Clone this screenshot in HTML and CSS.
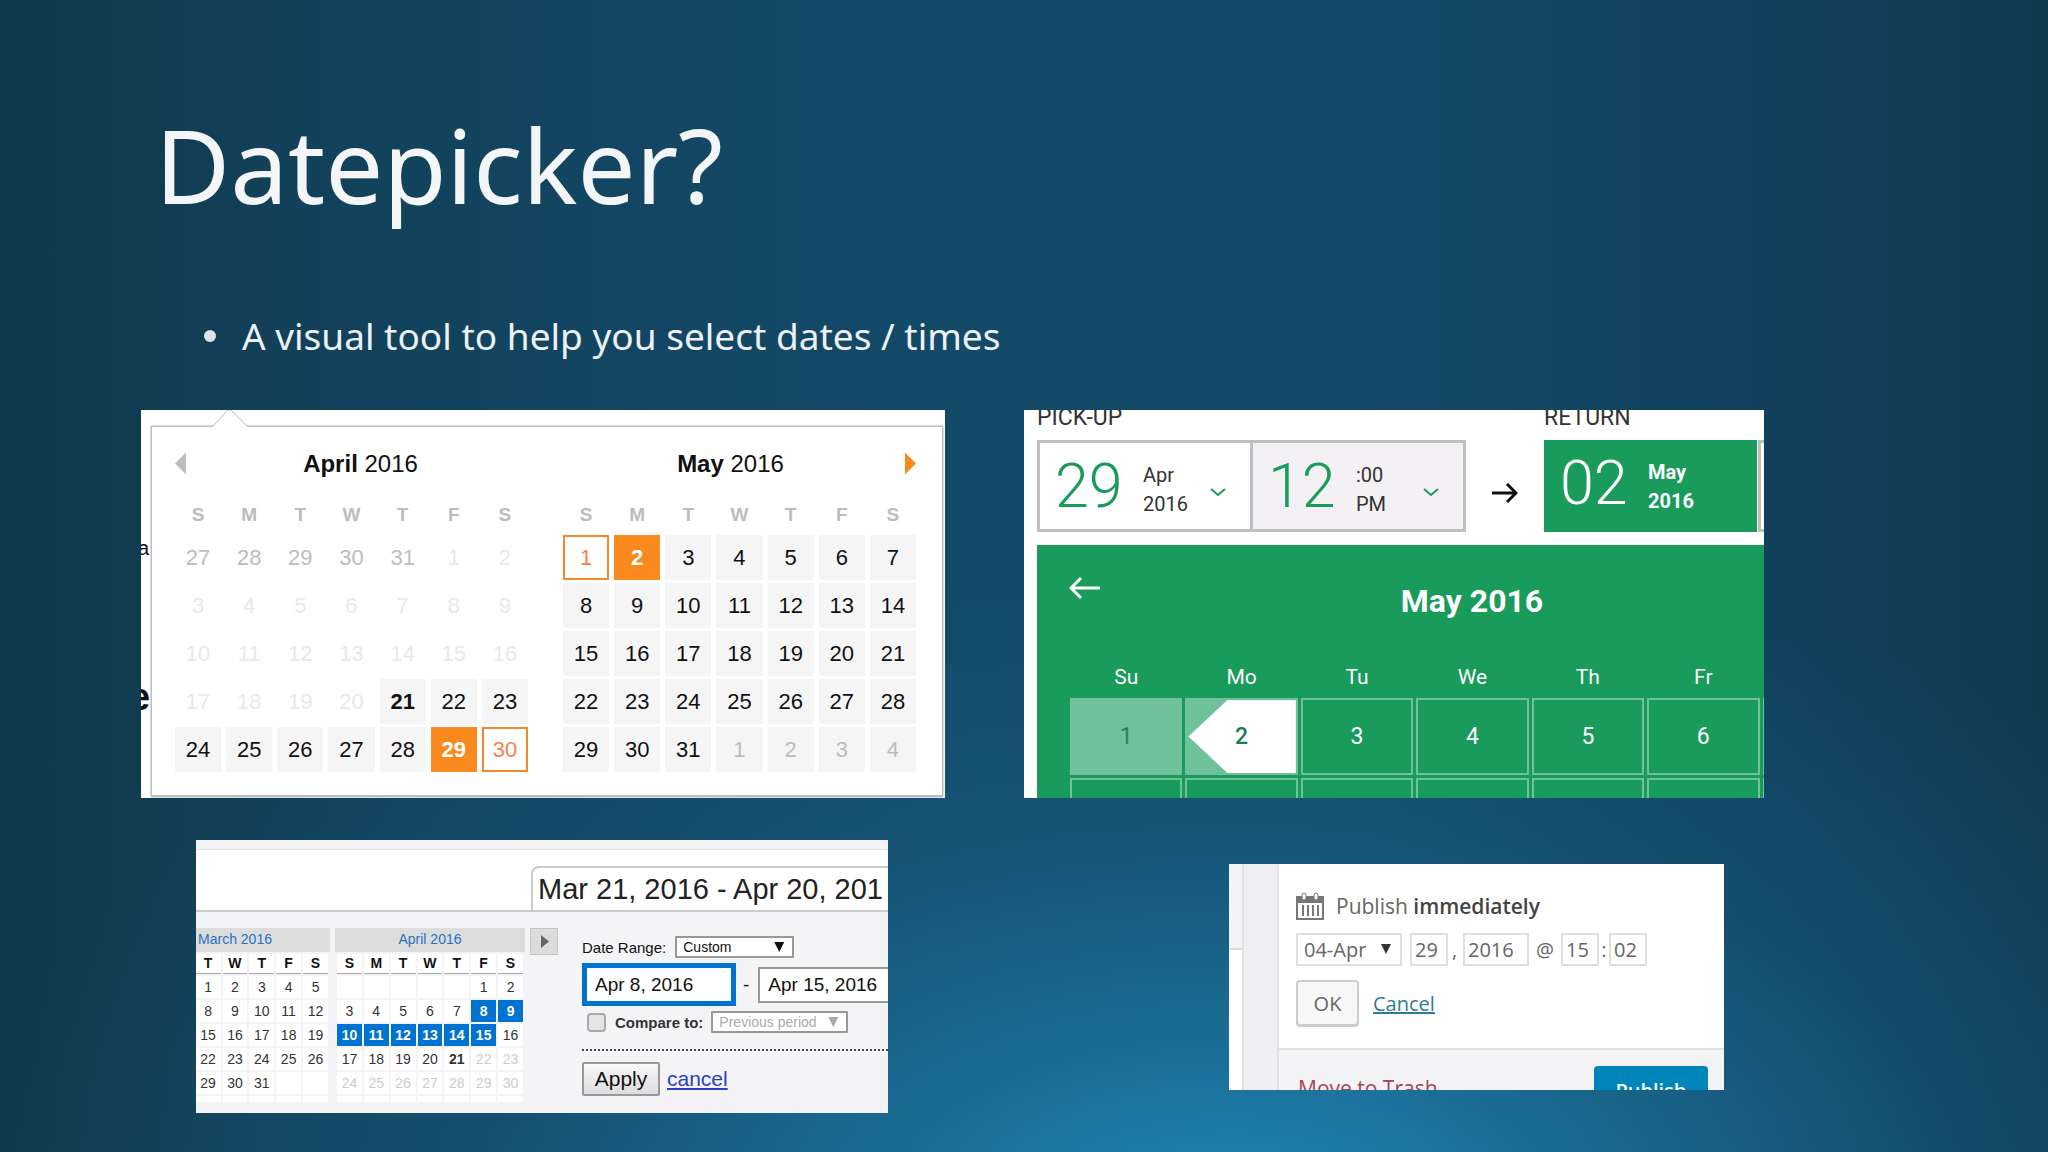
FILE: index.html
```html
<!DOCTYPE html>
<html lang="en">
<head>
    <meta charset="UTF-8">
    <meta name="viewport" content="width=device-width, initial-scale=1.0">
    <title>Datepicker?</title>
    <link rel="stylesheet" href="styles.css">
</head>
<body>

    <main class="slide">
        <h1>Datepicker?</h1>
        <ul class="points">
            <li>A visual tool to help you select dates / times</li>
        </ul>

        <div class="examples">

            <!-- Two month hotel picker -->
            <section class="panel hotel">
                <span class="behind behind-small">a</span>
                <span class="behind behind-large">e</span>
                <div class="popup">
                    <svg class="notch" width="36" height="18" viewBox="0 0 36 18">
                        <path d="M0 18 L1 17 L16 1 H19 L35 17 L36 18 Z" fill="#fff"/>
                        <path d="M0 17 H1 L16 1 H19 L35 17 H36" fill="none" stroke="#bcbcbe" stroke-width="1"/>
                    </svg>
                    <div class="month">
                        <div class="month-head">
                            <button class="nav prev" type="button" aria-label="Previous month"></button>
                            <h2><b>April</b> 2016</h2>
                        </div>
                        <table class="days" id="hotelApril"></table>
                    </div>
                    <div class="month">
                        <div class="month-head">
                            <h2><b>May</b> 2016</h2>
                            <button class="nav next" type="button" aria-label="Next month"></button>
                        </div>
                        <table class="days" id="hotelMay"></table>
                    </div>
                </div>
            </section>

            <!-- Car rental picker -->
            <section class="panel rental">
                <div class="rental-fields">
                    <div class="field">
                        <p class="field-label">PICK-UP</p>
                        <div class="boxes">
                            <button class="box" type="button">
                                <span class="big">29</span>
                                <span class="small">Apr<br>2016</span>
                                <svg width="16" height="10" viewBox="0 0 16 10"><path d="M1 1 L8 7 L15 1" fill="none" stroke="#199b5b" stroke-width="2"/></svg>
                            </button>
                            <button class="box time" type="button">
                                <span class="big">12</span>
                                <span class="small">:00<br>PM</span>
                                <svg width="16" height="10" viewBox="0 0 16 10"><path d="M1 1 L8 7 L15 1" fill="none" stroke="#199b5b" stroke-width="2"/></svg>
                            </button>
                        </div>
                    </div>
                    <svg class="to" width="26" height="20" viewBox="0 0 26 20"><path d="M0 10 H24 M15 1 L24 10 L15 19" fill="none" stroke="#111" stroke-width="3"/></svg>
                    <div class="field">
                        <p class="field-label">RETURN</p>
                        <div class="boxes">
                            <button class="box active" type="button">
                                <span class="big">02</span>
                                <span class="small">May<br>2016</span>
                            </button>
                            <span class="box rest"></span>
                        </div>
                    </div>
                </div>
                <div class="rental-calendar">
                    <div class="rental-head">
                        <button type="button" aria-label="Previous month">
                            <svg width="32" height="24" viewBox="0 0 32 24"><path d="M31 12 H2 M12 2 L2 12 L12 22" fill="none" stroke="#fff" stroke-width="3"/></svg>
                        </button>
                        <h2>May 2016</h2>
                    </div>
                    <table class="days" id="rentalMay"></table>
                </div>
            </section>

            <!-- Analytics date range -->
            <section class="panel analytics">
                <div class="tabs">
                    <div class="tab">Mar 21, 2016 - Apr 20, 201</div>
                </div>
                <div class="range">
                    <div class="range-months">
                        <table class="days" id="rangeMarch"><caption>March 2016</caption></table>
                        <table class="days" id="rangeApril"><caption>April 2016</caption></table>
                    </div>
                    <button class="step" type="button" aria-label="Next month"></button>
                    <form class="range-form">
                        <div class="line">
                            <label for="preset">Date Range:</label>
                            <span class="select preset">
                                <select id="preset"><option>Custom</option></select>
                            </span>
                        </div>
                        <div class="line dates">
                            <input class="from" type="text" value="Apr 8, 2016" aria-label="From">
                            <span>-</span>
                            <input class="until" type="text" value="Apr 15, 2016" aria-label="To">
                        </div>
                        <div class="line compare">
                            <input type="checkbox" id="compare">
                            <label for="compare">Compare to:</label>
                            <span class="select period">
                                <select aria-label="Compare period" disabled><option>Previous period</option></select>
                            </span>
                        </div>
                        <div class="actions">
                            <button type="button">Apply</button>
                            <a href="#">cancel</a>
                        </div>
                    </form>
                </div>
            </section>

            <!-- Publish box -->
            <section class="panel publish">
                <div class="editor"></div>
                <div class="gutter"></div>
                <div class="postbox">
                    <div class="schedule">
                        <p class="when">
                            <svg width="28" height="28" viewBox="0 0 28 28">
                                <rect x="1" y="5" width="26" height="22" fill="#fff" stroke="#777" stroke-width="2"/>
                                <rect x="1" y="4" width="26" height="7" fill="#777"/>
                                <rect x="6" y="1" width="4" height="7" rx="2" fill="#fff" stroke="#777"/>
                                <rect x="18" y="1" width="4" height="7" rx="2" fill="#fff" stroke="#777"/>
                                <path d="M7 13 V24 M12 13 V24 M17 13 V24 M22 13 V24" stroke="#777" stroke-width="2"/>
                            </svg>
                            <span>Publish <b>immediately</b></span>
                        </p>
                        <div class="stamp">
                            <span class="select month-select">
                                <select aria-label="Month"><option>04-Apr</option></select>
                            </span>
                            <input class="two day" type="text" value="29" aria-label="Day">
                            <span class="comma">,</span>
                            <input class="four" type="text" value="2016" aria-label="Year">
                            <span class="at">@</span>
                            <input class="two" type="text" value="15" aria-label="Hour">
                            <span class="colon">:</span>
                            <input class="two" type="text" value="02" aria-label="Minute">
                        </div>
                        <div class="confirm">
                            <button type="button">OK</button>
                            <a href="#">Cancel</a>
                        </div>
                    </div>
                    <div class="major">
                        <a href="#">Move to Trash</a>
                        <button type="button">Publish</button>
                    </div>
                </div>
            </section>

        </div>
    </main>

    <script src="script.js"></script>
</body>
</html>
```
FILE: styles.css
```css
*, *::before, *::after {
    box-sizing: border-box;
    margin: 0;
    padding: 0;
}

body {
    min-height: 100vh;
    font-family: "Liberation Sans", Arial, sans-serif;
    background:
        radial-gradient(ellipse 62% 58% at 60% 106%, #2088ba 0%, rgba(30, 122, 167, 0.7) 28%, rgba(26, 100, 140, 0.35) 60%, rgba(20, 80, 115, 0) 100%),
        linear-gradient(90deg, #0f384a 0%, #12415a 14%, #134a68 45%, #134a68 65%, #11405b 88%, #0f394f 100%);
    color: #111;
    overflow-x: hidden;
}

button, input, select {
    font: inherit;
    color: inherit;
    background: none;
    border: 0;
    border-radius: 0;
    appearance: none;
}

/* Slide text */
.slide {
    padding: 104px 284px 38px 141px;
}

h1 {
    padding-left: 14px;
    font-family: "Noto Sans", sans-serif;
    font-size: 103px;
    font-weight: 400;
    line-height: 120px;
    color: #f4f5f7;
}

.points {
    margin: 84px 0 46px 63px;
    list-style: none;
}

.points li {
    display: flex;
    align-items: center;
    gap: 26px;
    font-family: "Noto Sans", sans-serif;
    font-size: 37px;
    line-height: 56px;
    color: #eef1f4;
}

.points li::before {
    content: "";
    width: 12px;
    height: 12px;
    border-radius: 50%;
    background: #dfe5e9;
}

.examples {
    display: grid;
    grid-template-columns: 804fr 740fr;
    column-gap: 79px;
    align-items: start;
}

.panel {
    position: relative;
    min-width: 0;
    overflow: hidden;
    background: #fff;
}

/* Shared calendar tables */
.days {
    table-layout: fixed;
    border-collapse: separate;
    text-align: center;
}

.days td button {
    display: block;
    width: 100%;
    height: 100%;
    text-align: center;
}

/* Hotel picker */
.hotel {
    padding: 16px 2px 1px 10px;
    height: 388px;
}

.behind {
    position: absolute;
    left: -3px;
}

.behind-small {
    top: 127px;
    font-size: 20px;
}

.behind-large {
    top: 266px;
    left: -12px;
    font-size: 38px;
    font-weight: 700;
}

.popup {
    position: relative;
    display: flex;
    gap: 25px;
    height: 371px;
    padding: 20px 18px;
    background: #fff;
    border: 1px solid #bcbcbe;
    border-bottom-width: 2px;
    box-shadow: 0 0 2px #999;
}

.notch {
    position: absolute;
    top: -18px;
    left: 60px;
}

.month-head {
    display: flex;
    align-items: center;
    height: 33px;
    padding: 0 5px;
}

.month-head h2 {
    flex: 1;
    font-size: 24px;
    font-weight: 400;
    text-align: center;
}

.nav {
    width: 18px;
    height: 22px;
}

.nav::before {
    content: "";
    display: block;
    width: 11px;
    height: 22px;
    background: #bcbcbe;
    clip-path: polygon(100% 0, 100% 100%, 0 50%);
}

.nav.next::before {
    margin-left: auto;
    background: #fa8a1e;
    clip-path: polygon(0 0, 100% 50%, 0 100%);
}

.hotel .days {
    width: 363px;
    border-spacing: 5px 3px;
    font-size: 22px;
}

.hotel th {
    height: 49px;
    padding-top: 14px;
    font-size: 19px;
    color: #bcbcbe;
}

.hotel td {
    height: 45px;
    background: #f5f5f6;
}

.hotel td.past,
.hotel td.before {
    background: #fff;
    color: #ebe8ec;
}

.hotel td.before,
.hotel td.after {
    color: #bcbcbe;
}

.hotel td.today {
    font-weight: 700;
}

.hotel td.picked {
    background: #fa8a1e;
    color: #fff;
    font-weight: 700;
}

.hotel td.between {
    background: #fff;
    border: 2px solid #f08a2c;
    color: #f5824a;
}

/* Car rental picker */
.rental {
    height: 388px;
    padding-left: 13px;
    font-family: Roboto, sans-serif;
}

.rental-fields {
    display: flex;
    height: 135px;
}

.field {
    flex: none;
}

.field-label {
    height: 36px;
    margin-top: -6px;
    font-size: 23px;
    line-height: 28px;
    color: #333;
}

.boxes {
    display: flex;
}

.box {
    display: flex;
    align-items: center;
    width: 216px;
    height: 92px;
    padding: 0 24px 0 15px;
    border: 3px solid #bfbfc1;
    color: #333;
    text-align: left;
}

.box .big {
    width: 88px;
    font-size: 61px;
    font-weight: 300;
    line-height: 64px;
    color: #199b5b;
}

.box .small {
    flex: 1;
    padding-top: 8px;
    font-size: 20px;
    line-height: 29px;
}

.box svg {
    margin-top: 14px;
}

.box.time {
    margin-left: -3px;
    background: #f3f1f4;
}

.box.active {
    width: 213px;
    padding: 0 24px 6px 13px;
    background: #199b5b;
    border-color: #199b5b;
    color: #fff;
}

.box.active .big {
    color: #fff;
}

.box.active .small {
    font-weight: 700;
}

.box.rest {
    margin-left: 1px;
}

.to {
    flex: none;
    margin: 73px 26px 0;
}

.rental-calendar {
    width: 870px;
    padding: 0 30px;
    background: #199b5b;
    color: #fff;
}

.rental-head {
    display: grid;
    grid-template-columns: 32px 1fr 32px;
    align-items: start;
    height: 110px;
    padding: 31px 2px 0;
}

.rental-head button {
    height: 24px;
}

.rental-head h2 {
    padding-top: 5px;
    font-size: 32px;
    font-weight: 700;
    line-height: 40px;
    text-align: center;
}

.rental .days {
    width: 811px;
    border-spacing: 3px;
    font-size: 23px;
}

.rental th {
    height: 37px;
    font-size: 21px;
    font-weight: 400;
}

.rental td {
    height: 77px;
    border: 2px solid #6ec198;
}

.rental td.disabled {
    background: #6ec198;
    color: #22855a;
}

.rental td.start {
    background: #6ec198;
    color: #1c7d53;
    font-weight: 500;
}

.rental td.start button {
    background: #fff;
    clip-path: polygon(1px 50%, 40px 0, 100% 0, 100% 100%, 40px 100%);
}

/* Analytics date range */
.analytics {
    height: 273px;
    margin: 42px 57px 0 55px;
    border-top: 9px solid #f4f3f5;
    background: #f4f3f5;
}

.tabs {
    height: 63px;
    padding: 16px 0 0 335px;
    background: #fff;
    border-top: 1px solid #e2e1e4;
    border-bottom: 2px solid #cbcacd;
    overflow: hidden;
}

.tab {
    width: 440px;
    height: 46px;
    padding-left: 5px;
    border: 2px solid #cbcacd;
    border-bottom: 0;
    border-radius: 8px 0 0 0;
    font-size: 29px;
    line-height: 42px;
    color: #222;
    white-space: nowrap;
}

.range {
    display: flex;
    align-items: flex-start;
    padding-top: 16px;
}

.range-months {
    flex: none;
    display: flex;
    justify-content: flex-end;
    gap: 5px;
    width: 329px;
    overflow: hidden;
}

.analytics .days {
    flex: none;
    width: 190px;
    border-spacing: 2px;
    font-size: 14px;
    line-height: 20px;
}

.analytics caption {
    height: 24px;
    line-height: 22px;
    background: #dcdcdd;
    color: #2a73bf;
}

.analytics th {
    height: 20px;
    background: #fff;
    border-bottom: 1px solid #aaa;
    line-height: 17px;
}

.analytics td {
    height: 22px;
    background: #fff;
    color: #333;
}

.analytics .spare td {
    height: 6px;
}

.analytics td.future {
    color: #ccc;
}

.analytics td.today {
    font-weight: 700;
}

.analytics td.picked {
    background: #0073d1;
    color: #fff;
    font-weight: 700;
}

.step {
    flex: none;
    width: 28px;
    height: 27px;
    margin-left: 5px;
    padding-left: 10px;
    background: #dcdcdd;
    border: 1px solid #c4c4c6;
}

.step::before {
    content: "";
    display: block;
    width: 8px;
    height: 13px;
    background: #666;
    clip-path: polygon(0 0, 100% 50%, 0 100%);
}

.range-form {
    flex: none;
    width: 330px;
    margin-left: 24px;
    padding-top: 8px;
    font-size: 15px;
}

.line {
    display: flex;
    align-items: center;
}

.select {
    position: relative;
    display: flex;
}

.select select {
    width: 100%;
    height: 100%;
}

.select::after {
    content: "";
    position: absolute;
    top: 6px;
    right: 8px;
    width: 10px;
    height: 10px;
    background: #111;
    clip-path: polygon(0 0, 100% 0, 50% 100%);
    pointer-events: none;
}

.analytics .select {
    height: 22px;
    border: 2px solid #999;
    border-radius: 1px;
    background: #fff;
    font-size: 14px;
}

.analytics .select::after {
    top: 4px;
}

.analytics select {
    padding-left: 6px;
}

.preset {
    width: 119px;
    margin-left: 9px;
}

.dates {
    gap: 7px;
    margin-top: 5px;
    font-size: 19px;
}

.dates .from {
    width: 154px;
    height: 43px;
    padding-left: 8px;
    border: 5px solid #0073d1;
    background: #fff;
}

.dates .until {
    width: 154px;
    height: 36px;
    margin-left: 2px;
    padding-left: 8px;
    border: 2px solid #999;
    background: #fff;
}

.compare {
    height: 22px;
    margin: 5px 0 16px;
    padding-left: 5px;
    font-weight: 700;
    color: #333;
}

.compare input {
    width: 19px;
    height: 19px;
    margin-right: 9px;
    border: 2px solid #aaa;
    border-radius: 4px;
    background: #e4e4e6;
}

.period {
    width: 137px;
    margin-left: 8px;
    font-weight: 400;
    color: #aaa;
}

.period select:disabled {
    opacity: 1;
}

.period::after {
    background: #aaa;
}

.actions {
    display: flex;
    align-items: center;
    gap: 7px;
    padding-top: 11px;
    border-top: 2px dotted #444;
    font-size: 21px;
}

.actions button {
    width: 78px;
    height: 34px;
    border: 2px solid #999;
    border-radius: 2px;
    background: linear-gradient(#f8f8f8, #dddddf);
}

.actions a {
    color: #2c3fc4;
}

/* Publish box */
.publish {
    display: flex;
    height: 226px;
    margin: 66px 40px 0 205px;
    font-family: "Open Sans", sans-serif;
    font-size: 20px;
    color: #666;
}

.editor {
    width: 15px;
    border-right: 2px solid #e2e1e4;
    background: linear-gradient(#f3f3f5 84px, #dcdcde 84px, #dcdcde 86px, #fff 86px);
}

.gutter {
    width: 35px;
    background: #efeef1;
    border-right: 2px solid #e2e1e4;
}

.postbox {
    flex: 1;
    min-width: 0;
}

.schedule {
    height: 184px;
    padding: 26px 0 0 17px;
}

.when {
    display: flex;
    align-items: center;
    gap: 12px;
    height: 32px;
    font-size: 21px;
}

.when b {
    font-weight: 600;
    color: #444;
}

.stamp {
    display: flex;
    align-items: center;
    height: 33px;
    margin-top: 11px;
}

.stamp input,
.stamp .select {
    height: 33px;
    border: 2px solid #dfdfe1;
    background: #fff;
}

.stamp input {
    padding-left: 3px;
}

.month-select {
    width: 106px;
}

.month-select select {
    padding-left: 6px;
}

.month-select::after {
    top: 9px;
    right: 9px;
    background: #333;
}

.two {
    width: 38px;
}

.day {
    margin-left: 8px;
}

.four {
    width: 66px;
}

.comma {
    width: 15px;
    padding-left: 4px;
}

.at {
    width: 32px;
    text-align: center;
}

.colon {
    width: 10px;
    text-align: center;
}

.confirm {
    display: flex;
    align-items: center;
    gap: 14px;
    margin-top: 14px;
}

.confirm button {
    width: 63px;
    height: 46px;
    border: 2px solid #ccc;
    border-radius: 4px;
    background: #f7f7f7;
    box-shadow: 0 1px 0 #ccc;
}

.confirm a {
    color: #2e7a9a;
}

.major {
    display: flex;
    justify-content: space-between;
    height: 90px;
    padding: 16px 16px 0 19px;
    background: #f4f3f5;
    border-top: 2px solid #e2e1e4;
}

.major a {
    padding-top: 8px;
    font-size: 21px;
    color: #a94452;
    text-decoration: none;
}

.major button {
    width: 114px;
    height: 48px;
    background: #0085ba;
    border-radius: 4px;
    color: #fff;
    font-weight: 600;
}
```
FILE: script.js
```js
const LETTERS = ['S', 'M', 'T', 'W', 'T', 'F', 'S'];
const SHORT = ['Su', 'Mo', 'Tu', 'We', 'Th', 'Fr', 'Sa'];

// Fills a table with one month. month is 1-12.
function fillMonth(id, month, options) {
    const table = document.getElementById(id);
    const firstWeekday = new Date(2016, month - 1, 1).getDay();
    const length = new Date(2016, month, 0).getDate();
    const lengthBefore = new Date(2016, month - 1, 0).getDate();

    const head = table.createTHead().insertRow();
    options.weekdays.forEach(function(name) {
        const th = document.createElement('th');
        th.textContent = name;
        head.appendChild(th);
    });

    const body = table.createTBody();
    for (let week = 0; week < options.weeks; week++) {
        const row = body.insertRow();
        for (let weekday = 0; weekday < 7; weekday++) {
            let day = week * 7 + weekday - firstWeekday + 1;
            const cell = row.insertCell();
            let name = '';
            if (day < 1 || day > length) {
                if (!options.neighbours) continue;
                name = day < 1 ? 'before' : 'after';
                day = day < 1 ? lengthBefore + day : day - length;
            } else {
                name = options.state ? options.state(day) : '';
            }
            if (name) cell.className = name;
            const button = document.createElement('button');
            button.type = 'button';
            button.textContent = day;
            cell.appendChild(button);
        }
    }

    if (options.spareRow) {
        const row = body.insertRow();
        row.className = 'spare';
        for (let i = 0; i < 7; i++) row.insertCell();
    }
}

fillMonth('hotelApril', 4, {
    weekdays: LETTERS,
    weeks: 5,
    neighbours: true,
    state: function(day) {
        if (day < 21) return 'past';
        return { 21: 'today', 29: 'picked', 30: 'between' }[day];
    }
});

fillMonth('hotelMay', 5, {
    weekdays: LETTERS,
    weeks: 5,
    neighbours: true,
    state: function(day) {
        return { 1: 'between', 2: 'picked' }[day];
    }
});

fillMonth('rentalMay', 5, {
    weekdays: SHORT,
    weeks: 2,
    state: function(day) {
        return { 1: 'disabled', 2: 'start' }[day];
    }
});

fillMonth('rangeMarch', 3, { weekdays: LETTERS, weeks: 5, spareRow: true });

fillMonth('rangeApril', 4, {
    weekdays: LETTERS,
    weeks: 5,
    spareRow: true,
    state: function(day) {
        if (day >= 8 && day <= 15) return 'picked';
        if (day === 21) return 'today';
        return day > 21 ? 'future' : '';
    }
});
```
